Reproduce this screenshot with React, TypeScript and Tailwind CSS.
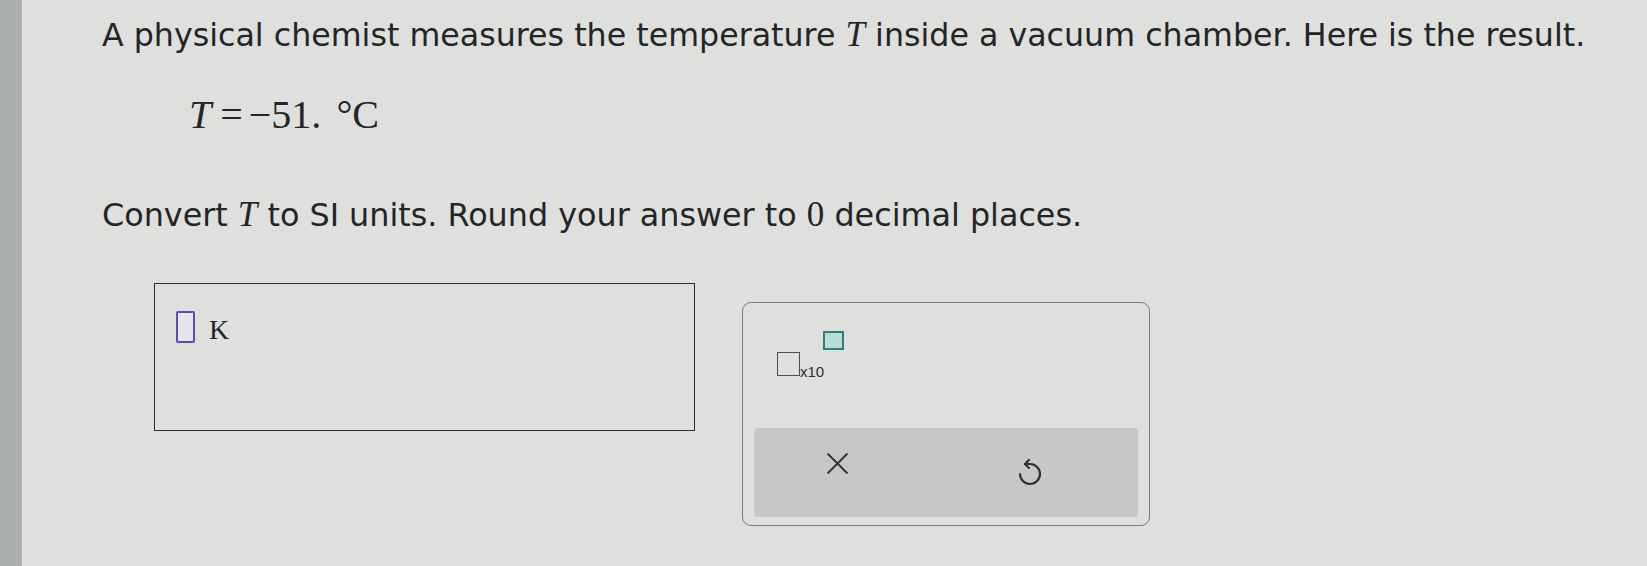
import React from 'react';

const sans = { fontFamily: '"DejaVu Sans", Verdana, sans-serif' };
const serif = { fontFamily: '"Liberation Serif", "Times New Roman", serif' };

const UndoIcon = () => (
  <svg width="32" height="32" viewBox="0 0 24 24" fill="none" stroke="#2b2f33" strokeWidth="1.6" strokeLinecap="round" strokeLinejoin="round">
    <path d="M8.5 4.5H12a7.5 7.5 0 1 1-7.5 7.5" />
    <path d="M11.2 1.5 8.2 4.5l3 3" />
  </svg>
);

const CloseIcon = () => (
  <svg width="25" height="25" viewBox="0 0 24 24" fill="none" stroke="#2b2f33" strokeWidth="2" strokeLinecap="round">
    <path d="M3 3l18 18M21 3 3 21" />
  </svg>
);

export default function App() {
  return (
    <div className="w-[1647px] h-[566px] flex overflow-hidden bg-[#dfe0dd] text-[#232527]">
      <div className="w-[22px] h-full bg-[#a9b0ae]" />
      <div className="flex flex-col pl-[80px] pt-[15px]">
        <p className="text-[31.7px] leading-[40px] whitespace-nowrap" style={sans}>
          A physical chemist measures the temperature{' '}
          <span className="italic text-[35px]" style={serif}>T</span> inside a vacuum chamber. Here is the result.
        </p>

        <div className="ml-[87px] mt-[38px] text-[40px] leading-[44px] whitespace-nowrap" style={serif}>
          <span className="italic">T</span>
          <span className="ml-[9px] mr-[6px]">=</span>
          <span>−51.</span>
          <span className="ml-[15px]">°C</span>
        </div>

        <p className="mt-[58px] text-[31.8px] leading-[40px] whitespace-nowrap" style={sans}>
          Convert <span className="italic text-[35px]" style={serif}>T</span> to SI units. Round your answer to{' '}
          <span className="text-[35px]" style={serif}>0</span> decimal places.
        </p>

        <div className="flex items-start mt-[48px] ml-[52px]">
          <div className="w-[541px] h-[148px] border-[1.5px] border-[#2d2f31] pt-[27px] pl-[21px]">
            <div className="flex items-end gap-[14px]">
              <div className="w-[19px] h-[32px] border-2 border-[#5a4db3] rounded-[2px] bg-[#e6e6ec]" />
              <span className="text-[28px] leading-[26px]" style={serif}>K</span>
            </div>
          </div>

          <div className="ml-[47px] mt-[19px] w-[408px] h-[224px] border-[1.5px] border-[#7a7d7f] rounded-[9px] flex flex-col px-[11px] pb-[8px]">
            <div className="h-[125px] pl-[23px] pt-[28px]">
              <div className="flex items-start">
                <div className="mt-[21px] w-[23px] h-[24px] border-[1.5px] border-[#4b4e50]" />
                <span className="mt-[33px] text-[15px] leading-[15px] text-[#2d2f31]" style={{ fontFamily: '"Liberation Sans", Arial, sans-serif' }}>x10</span>
                <div className="-ml-[1px] w-[21px] h-[19px] border-2 border-[#2f7f77] bg-[#b7ddd4]" />
              </div>
            </div>
            <div className="flex-1 bg-[#c6c8c5] rounded-[4px] flex items-center">
              <div className="w-[172px] flex justify-center -mt-[18px]">
                <CloseIcon />
              </div>
              <div className="w-[222px] flex justify-center mt-[2px]">
                <UndoIcon />
              </div>
            </div>
          </div>
        </div>
      </div>
    </div>
  );
}
